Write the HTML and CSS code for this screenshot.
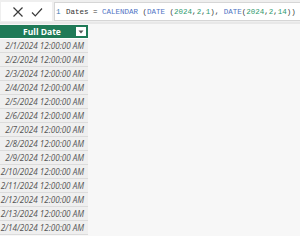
FILE: index.html
```html
<!DOCTYPE html>
<html>
<head>
<meta charset="utf-8">
<link rel="stylesheet" href="styles.css">
</head>
<body>
<div class="toolbar">
  <div class="actions">
    <svg class="icon" width="12" height="12" viewBox="0 0 12 12"><path d="M1.5 1.5 L10.5 10.5 M10.5 1.5 L1.5 10.5" stroke="#3a3a3a" stroke-width="1.2" fill="none"/></svg>
    <svg class="icon" width="12" height="12" viewBox="0 0 12 12"><path d="M1 6.5 L4.3 9.8 L11 2.5" stroke="#3a3a3a" stroke-width="1.2" fill="none"/></svg>
  </div>
  <div class="formula">
    <span class="ln">1</span><span class="code"><span class="id">Dates</span> = <span class="fn">CALENDAR</span> (<span class="fn">DATE</span> (<span class="num">2024</span>,<span class="num">2</span>,<span class="num">1</span>), <span class="fn">DATE</span>(<span class="num">2024</span>,<span class="num">2</span>,<span class="num">14</span>))</span>
  </div>
</div>
<div class="grid">
  <div class="header"><span>Full Date</span><span class="dd"><svg width="6" height="4" viewBox="0 0 6 4"><path d="M0.5 0.5 L5.5 0.5 L3 3.5 Z" fill="#555"/></svg></span></div>
  <div class="row">2/1/2024 12:00:00 AM</div>
  <div class="row">2/2/2024 12:00:00 AM</div>
  <div class="row">2/3/2024 12:00:00 AM</div>
  <div class="row">2/4/2024 12:00:00 AM</div>
  <div class="row">2/5/2024 12:00:00 AM</div>
  <div class="row">2/6/2024 12:00:00 AM</div>
  <div class="row">2/7/2024 12:00:00 AM</div>
  <div class="row">2/8/2024 12:00:00 AM</div>
  <div class="row">2/9/2024 12:00:00 AM</div>
  <div class="row">2/10/2024 12:00:00 AM</div>
  <div class="row">2/11/2024 12:00:00 AM</div>
  <div class="row">2/12/2024 12:00:00 AM</div>
  <div class="row">2/13/2024 12:00:00 AM</div>
  <div class="row">2/14/2024 12:00:00 AM</div>
</div>
</body>
</html>
```
FILE: styles.css
```css
html, body {
  margin: 0;
  padding: 0;
}
body {
  width: 300px;
  height: 236px;
  overflow: hidden;
  background: #f7f7f7;
  font-family: "Open Sans", "Noto Sans", sans-serif;
}
.toolbar {
  display: flex;
  gap: 2px;
  padding: 2px 0 0 1px;
  height: 20px;
  background: #efefef;
  border-bottom: 2px solid #e8e8e8;
}
.actions {
  width: 51px;
  height: 19px;
  background: #fff;
  display: flex;
  align-items: center;
  gap: 7px;
  padding-left: 11px;
  box-sizing: border-box;
}
.icon { display: block; }
.formula {
  flex: 1;
  height: 19px;
  background: #fff;
  border: 1px solid #d6d6d6;
  border-right: none;
  box-sizing: border-box;
  display: flex;
  align-items: center;
  padding-left: 1px;
  font-family: "Liberation Mono", "DejaVu Sans Mono", monospace;
  font-size: 7.5px;
  color: #3b3b3b;
  white-space: nowrap;
}
.ln { width: 10px; color: #3c7bb5; }
.fn { color: #4f74c4; }
.num { color: #2f9a6e; }
.id { color: #333; }
.grid {
  width: 88px;
  margin-top: 1px;
}
.header {
  height: 14px;
  background: #1f7a57;
  color: #fff;
  font-weight: bold;
  font-size: 8.5px;
  display: flex;
  align-items: center;
  justify-content: center;
  position: relative;
  border-bottom: 1px solid #fff;
  box-sizing: border-box;
  padding-right: 4px;
}
.dd {
  position: absolute;
  right: 2px;
  top: 2px;
  width: 10px;
  height: 9px;
  background: #fff;
  display: flex;
  align-items: center;
  justify-content: center;
}
.row {
  height: 13px;
  border-bottom: 1px solid #dcdcdc;
  background: #efefef;
  color: #555;
  font-style: italic;
  font-size: 8.1px;
  line-height: 13px;
  text-align: right;
  padding-right: 4px;
  white-space: nowrap;
  overflow: hidden;
}
```
